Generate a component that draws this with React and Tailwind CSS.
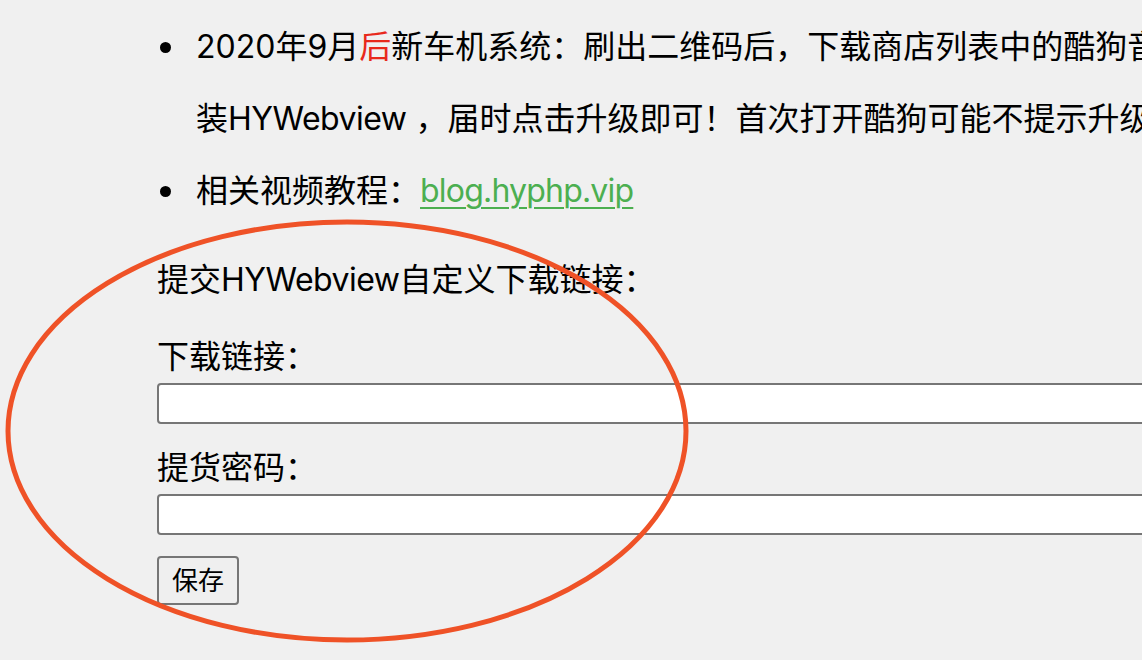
import React from "react";

function Bullet() {
  return (
    <span className="flex w-[39px] shrink-0 items-start">
      <span className="mt-[31px] ml-[3px] block h-[11px] w-[11px] rounded-full bg-black" />
    </span>
  );
}

export default function App() {
  return (
    <div className="relative h-[660px] w-[1142px] overflow-hidden bg-[#f0f0f0] text-[32px] text-black [font-family:Inter,'Noto_Sans_CJK_SC',sans-serif]">
      <div className="pl-[157px] pt-[11px]">
        <ul>
          <li className="flex leading-[72px]">
            <Bullet />
            <div>
              <div className="whitespace-nowrap">
                2020年9月<span className="text-[#e8291c]">后</span>新车机系统：刷出二维码后，下载商店列表中的酷狗音乐
              </div>
              <div className="whitespace-nowrap">
                装<span className="tracking-[-0.5px]">HYWebview</span> ，届时点击升级即可！首次打开酷狗可能不提示升级
              </div>
            </div>
          </li>
          <li className="flex leading-[72px]">
            <Bullet />
            <div className="whitespace-nowrap">
              相关视频教程：
              <a href="#" className="tracking-[-0.8px] text-[#4caf50] underline decoration-[2px] underline-offset-[5px]">
                blog.hyphp.vip
              </a>
            </div>
          </li>
        </ul>

        <div className="mt-[33px] whitespace-nowrap leading-[40px]">
          提交<span className="tracking-[-0.5px]">HYWebview</span>自定义下载链接：
        </div>

        <div className="mt-[37px] leading-[40px]">下载链接：</div>
        <input
          type="text"
          className="mt-[6px] block h-[41px] w-[1000px] rounded-[4px] border-2 border-[#767676] bg-white"
        />

        <div className="mt-[24px] leading-[40px]">提货密码：</div>
        <input
          type="password"
          className="mt-[6px] block h-[41px] w-[1000px] rounded-[4px] border-2 border-[#767676] bg-white"
        />

        <button
          type="button"
          className="mt-[21px] flex h-[49px] w-[82px] items-center justify-center rounded-[4px] border-2 border-[#767676] bg-[#efefef] text-[26px] leading-none"
        >
          保存
        </button>
      </div>

      <svg
        className="pointer-events-none absolute left-0 top-0"
        width="1142"
        height="660"
        viewBox="0 0 1142 660"
      >
        <ellipse cx="347" cy="431" rx="339" ry="209" fill="none" stroke="#ef5227" strokeWidth="5" />
      </svg>
    </div>
  );
}
